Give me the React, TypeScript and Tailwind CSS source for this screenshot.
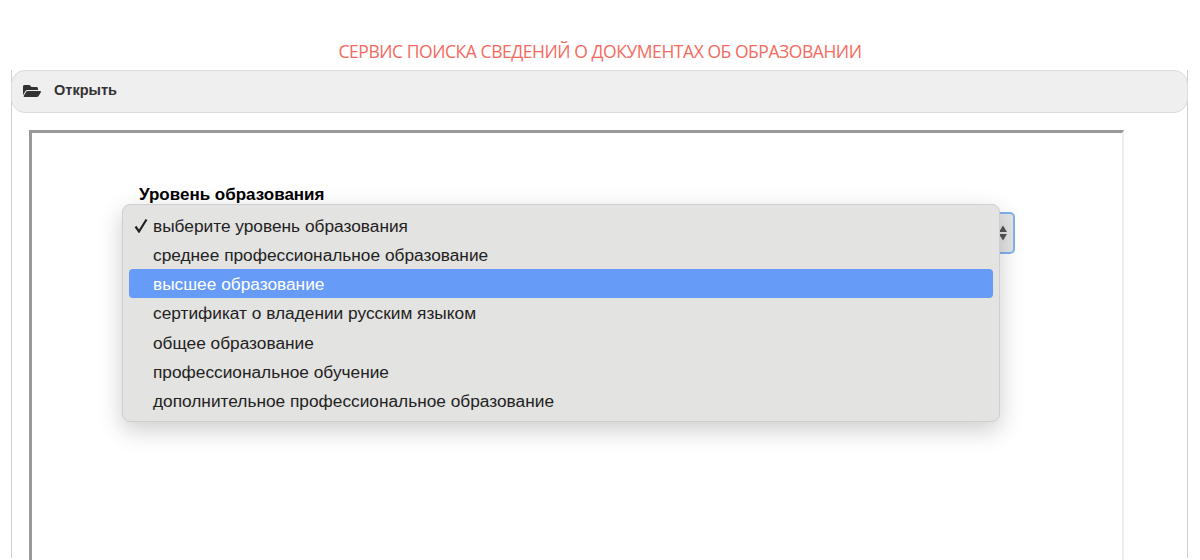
import { FaFolderOpen } from 'react-icons/fa';

const options = [
  'выберите уровень образования',
  'среднее профессиональное образование',
  'высшее образование',
  'сертификат о владении русским языком',
  'общее образование',
  'профессиональное обучение',
  'дополнительное профессиональное образование',
];

export default function App() {
  return (
    <div className="h-[560px] w-[1200px] overflow-hidden bg-white font-['Liberation_Sans',sans-serif]">
      <h1 className="h-[70px] pt-[39px] text-center font-['Open_Sans',sans-serif] text-[17.5px] leading-6 tracking-[-0.45px] text-[#f56a5e]">
        СЕРВИС ПОИСКА СВЕДЕНИЙ О ДОКУМЕНТАХ ОБ ОБРАЗОВАНИИ
      </h1>

      <div className="mr-[12px] ml-[11px] h-[488px] border-x border-[#d0d0d0]">
        <div className="-mx-px flex h-[43px] items-center rounded-[14px] border-[1.5px] border-[#dcdcdc] bg-[#efefef] pb-[2px] pl-[11px] text-[#333]">
          <FaFolderOpen className="text-[18px] text-[#333]" />
          <span className="ml-[13px] text-[14.5px] font-bold">Открыть</span>
        </div>

        <div className="mt-[17px] ml-[17px] h-[440px] w-[1095px] border-t-[3px] border-r-2 border-l-[3px] border-t-[#999] border-r-[#eee] border-l-[#999] pl-[107px]">
          <div className="pt-[52px] text-[17px] leading-5 font-bold text-black">Уровень образования</div>

          <div className="relative mt-[7px] -ml-[10px] h-[42px] w-[886px]">
            <div className="flex h-full items-center justify-end rounded-[5px] border-2 border-[#7fb2ee] bg-[#e4e4e4] pr-[6px]">
              <svg width="8" height="16" viewBox="0 0 8 16" fill="#555">
                <path d="M4 0.5 8 7H0Z" />
                <path d="M4 15.5 0 9H8Z" />
              </svg>
            </div>

            <div className="absolute -top-[8px] -left-[7px] w-[878px] rounded-[8px] border border-[#cfcfcf] bg-[#e3e3e1] px-[6px] pt-[5px] pb-[6px] shadow-[0_8px_24px_rgba(0,0,0,0.2)]">
              {options.map((label, i) => (
                <div
                  key={label}
                  className={`relative flex h-[29.25px] items-center rounded-[4px] pt-[4px] pl-[24px] text-[17.3px] ${
                    i === 2 ? 'bg-[#669cf8] text-white' : 'text-[#222]'
                  }`}
                >
                  {i === 0 && (
                    <svg className="absolute top-[8px] left-[5px]" width="14" height="15" viewBox="0 0 14 15" fill="none" stroke="#222" strokeWidth="2.2">
                      <path d="M1.5 8.5 5 13.5 12.5 1.5" />
                    </svg>
                  )}
                  {label}
                </div>
              ))}
            </div>
          </div>
        </div>
      </div>
    </div>
  );
}
